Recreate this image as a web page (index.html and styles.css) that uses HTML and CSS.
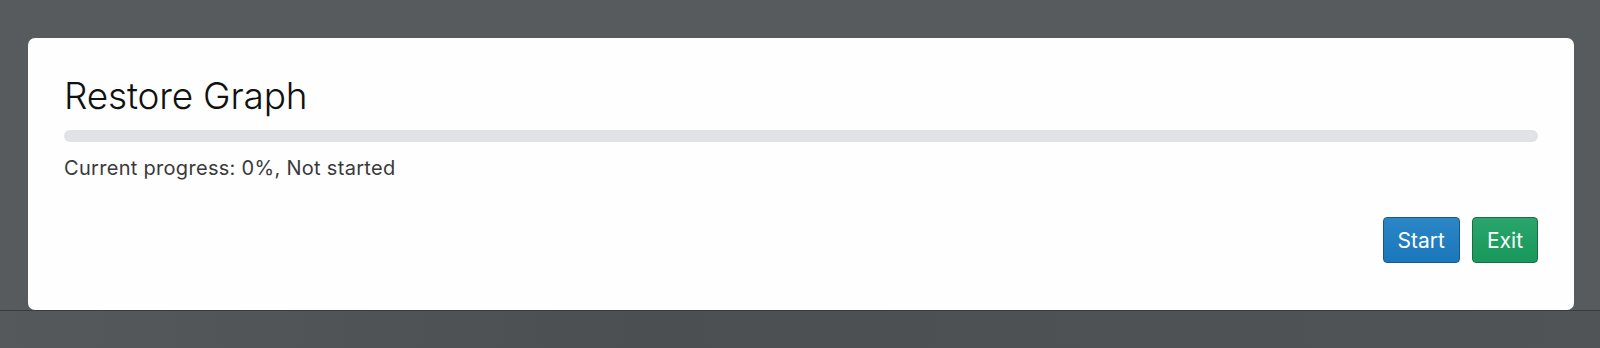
FILE: index.html
```html
<!DOCTYPE html>
<html lang="en">
<head>
    <meta charset="UTF-8">
    <meta name="viewport" content="width=device-width, initial-scale=1.0">
    <title>Restore Graph</title>
    <link rel="stylesheet" href="styles.css">
</head>
<body>

    <div class="backdrop">
        <div class="dialog">
            <h1 class="dialog-title">Restore Graph</h1>

            <div class="progress">
                <div class="progress-bar" style="width: 0%"></div>
            </div>
            <p class="progress-text" id="progressText">Current progress: 0%, Not started</p>

            <div class="dialog-actions">
                <button class="btn btn-start" id="startButton">Start</button>
                <button class="btn btn-exit" id="exitButton">Exit</button>
            </div>
        </div>
    </div>
    <div class="page-bottom"></div>

</body>
</html>
```

FILE: styles.css
```css
body {
    margin: 0;
    background-color: #575b5e;
    font-family: Inter, 'Noto Sans', sans-serif;
    height: 348px;
    overflow: hidden;
}

.backdrop {
    padding: 38px 26px 0 28px;
    border-bottom: 1px solid #393c3f;
}

.dialog {
    background-color: #fefefe;
    border-radius: 7px;
    height: 272px;
    box-sizing: border-box;
    padding: 36px 36px 0 36px;
    display: flex;
    flex-direction: column;
}

.dialog-title {
    margin: 0;
    font-size: 37px;
    font-weight: 300;
    line-height: 44px;
    color: #111;
    letter-spacing: -0.2px;
}

.progress {
    margin-top: 12px;
    height: 12px;
    border-radius: 6px;
    background-color: #e0e2e5;
    overflow: hidden;
}

.progress-bar {
    height: 100%;
    background-color: #2280c3;
}

.progress-text {
    margin: 13px 0 0 0;
    font-size: 20px;
    line-height: 26px;
    letter-spacing: 0.3px;
    color: #3a3a3a;
}

.dialog-actions {
    display: flex;
    justify-content: flex-end;
    gap: 12px;
    margin-top: 36px;
}

.btn {
    height: 46px;
    padding: 0 14px;
    font-family: Inter, 'Noto Sans', sans-serif;
    font-size: 21px;
    color: #fff;
    border-radius: 4px;
    cursor: pointer;
}

.btn-start {
    background: linear-gradient(#2c86c6, #1a77bb);
    border: 1px solid #1b5784;
}

.btn-exit {
    background: linear-gradient(#2aa56b, #18985b);
    border: 1px solid #1d6a45;
}

.page-bottom {
    height: 40px;
    background: linear-gradient(90deg, #56595c, #4b4f52 40%, #505457);
}
```
